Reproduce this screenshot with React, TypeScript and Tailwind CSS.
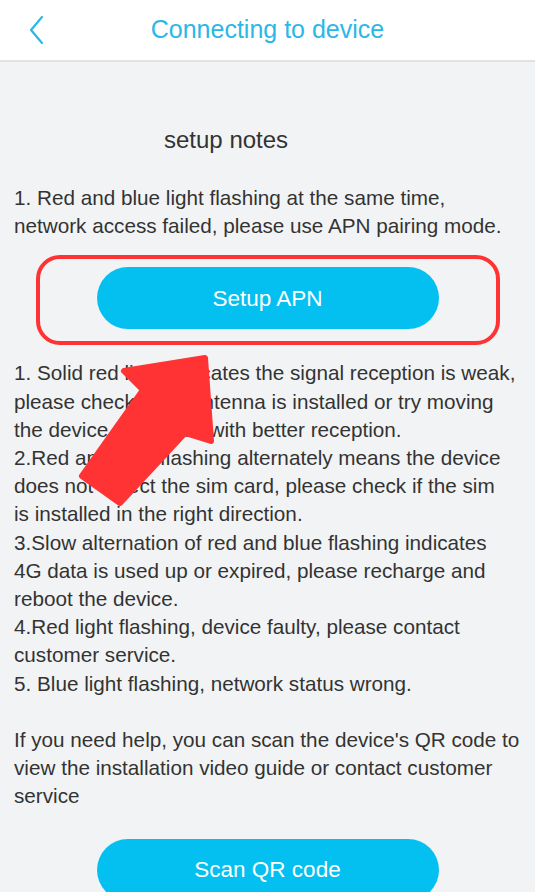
const NOTES = [
  '1. Solid red light indicates the signal reception is weak,\nplease check if the antenna is installed or try moving\nthe device to a place with better reception.',
  '2.Red and blue flashing alternately means the device\ndoes not detect the sim card, please check if the sim\nis installed in the right direction.',
  '3.Slow alternation of red and blue flashing indicates\n4G data is used up or expired, please recharge and\nreboot the device.',
  '4.Red light flashing, device faulty, please contact\ncustomer service.',
  '5. Blue light flashing, network status wrong.',
]

function Back() {
  return (
    <svg width="16" height="30" viewBox="0 0 16 30" fill="none">
      <polyline points="13,2 2,15 13,28" stroke="currentColor" strokeWidth="2.2" strokeLinecap="round" strokeLinejoin="round" />
    </svg>
  )
}

export default function App() {
  return (
    <div className="relative h-[892px] w-full overflow-hidden bg-[#f2f3f5] font-['Liberation_Sans',Arial,sans-serif] text-[#333]">
      {/* Header */}
      <header className="relative flex h-[62px] items-center justify-center border-b-2 border-[#e2e2e2] bg-white">
        <button className="absolute left-[29px] top-[15px] text-[#2bb7e8]">
          <Back />
        </button>
        <h1 className="text-[25px] text-[#2bb7e8]">Connecting to device</h1>
      </header>

      <main className="px-[14px] pt-[64px]">
        <h2 className="pl-[150px] text-[24px] leading-[28px]">setup notes</h2>

        <p className="mt-[30px] whitespace-pre text-[20.7px] leading-[28.2px]">
          {'1. Red and blue light flashing at the same time,\nnetwork access failed, please use APN pairing mode.'}
        </p>

        <div className="mt-[27px] flex justify-center">
          <button className="h-[62px] w-[342px] rounded-full bg-[#03c0f1] text-[22.5px] text-white">
            Setup APN
          </button>
        </div>

        <div className="mt-[30px] whitespace-pre text-[20.7px] leading-[28.2px]">
          {NOTES.map((n) => (
            <p key={n}>{n}</p>
          ))}
          <p className="mt-[28.2px]">
            {"If you need help, you can scan the device's QR code to\nview the installation video guide or contact customer\nservice"}
          </p>
        </div>

        <div className="mt-[28px] flex justify-center">
          <button className="h-[62px] w-[342px] rounded-full bg-[#03c0f1] text-[22.5px] text-white">
            Scan QR code
          </button>
        </div>
      </main>

      {/* Annotation overlay */}
      <div className="pointer-events-none absolute left-[36px] top-[255px] h-[90px] w-[464px] rounded-[24px] border-4 border-[#ff3333]" />
      <svg className="pointer-events-none absolute left-0 top-0" width="535" height="892">
        <polygon
          points="205,358 211,441 185,433 120,503 82,476 143,390 124,371"
          fill="#ff3333"
          stroke="#ff3333"
          strokeWidth="6"
          strokeLinejoin="round"
        />
      </svg>
    </div>
  )
}
